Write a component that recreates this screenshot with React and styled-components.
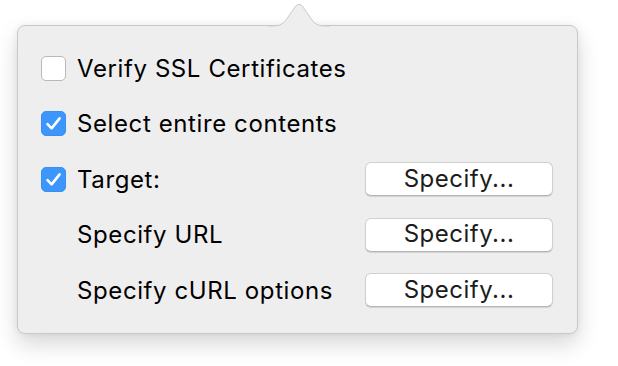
import React from "react";
import styled, { createGlobalStyle } from "styled-components";

const GlobalStyle = createGlobalStyle`
  html, body {
    margin: 0;
    padding: 0;
    background: #ffffff;
  }
  body {
    font-family: Inter, "Noto Sans", "Liberation Sans", sans-serif;
    -webkit-font-smoothing: antialiased;
  }
`;

const Page = styled.div`
  width: 618px;
  height: 366px;
  padding: 25px 0 0 17px;
  box-sizing: border-box;
`;

const Popover = styled.div`
  position: relative;
  width: 561px;
  height: 309px;
  box-sizing: border-box;
  background: #eeeeee;
  border: 1px solid #c9c9c9;
  border-radius: 8px;
  box-shadow: 0 10px 22px rgba(0, 0, 0, 0.16), 0 0 6px rgba(0, 0, 0, 0.06);
  padding: 25px 24px 0 23px;
  display: flex;
  flex-direction: column;
  gap: 21.5px;
`;

const Arrow = styled.svg`
  position: absolute;
  top: -24px;
  left: 250px;
  width: 62px;
  height: 25px;
  overflow: visible;
`;

const Row = styled.div`
  height: 34px;
  display: flex;
  align-items: center;
  justify-content: space-between;
`;

const LabelGroup = styled.label`
  display: flex;
  align-items: center;
  gap: 11px;
  font-size: 24px;
  color: #000;
  letter-spacing: 0.6px;
`;

const Box = styled.span`
  width: 25px;
  height: 25px;
  box-sizing: border-box;
  border-radius: 5px;
  display: flex;
  align-items: center;
  justify-content: center;
  background: ${(p) => (p.$checked ? "#3d96fb" : "#ffffff")};
  border: 1px solid ${(p) => (p.$checked ? "#3a8ff0" : "#b8b8b8")};
  visibility: ${(p) => (p.$hidden ? "hidden" : "visible")};
`;

const Button = styled.button`
  width: 188px;
  height: 34px;
  box-sizing: border-box;
  background: #ffffff;
  border: 1px solid #cfcfcf;
  border-bottom-color: #b5b5b5;
  border-radius: 6px;
  box-shadow: 0 1px 1px rgba(0, 0, 0, 0.12);
  font-family: inherit;
  font-size: 24px;
  letter-spacing: 0.5px;
  color: #1c1c1c;
  padding: 0 0 2px;
`;

const Check = () => (
  <svg width="17" height="15" viewBox="0 0 17 15">
    <path
      d="M2.5 8.2 L6.6 12.4 L14.6 2.4"
      fill="none"
      stroke="#fff"
      strokeWidth="2.6"
      strokeLinecap="round"
      strokeLinejoin="round"
    />
  </svg>
);

const rows = [
  { label: "Verify SSL Certificates", box: "off" },
  { label: "Select entire contents", box: "on" },
  { label: "Target:", box: "on", button: true },
  { label: "Specify URL", box: "none", button: true },
  { label: "Specify cURL options", box: "none", button: true },
];

export default function App() {
  return (
    <>
      <GlobalStyle />
      <Page>
        <Popover>
          <Arrow viewBox="0 0 62 25">
            <path
              d="M0 24.5 C10 24.5 14 23 18 18 L27 5 C29.5 1.5 32.5 1.5 35 5 L44 18 C48 23 52 24.5 62 24.5"
              fill="#eeeeee"
              stroke="#c9c9c9"
              strokeWidth="1"
            />
            <rect x="0" y="24.5" width="62" height="2" fill="#eeeeee" />
          </Arrow>
          {rows.map((r) => (
            <Row key={r.label}>
              <LabelGroup>
                <Box $checked={r.box === "on"} $hidden={r.box === "none"}>
                  {r.box === "on" && <Check />}
                </Box>
                {r.label}
              </LabelGroup>
              {r.button && <Button>Specify...</Button>}
            </Row>
          ))}
        </Popover>
      </Page>
    </>
  );
}
